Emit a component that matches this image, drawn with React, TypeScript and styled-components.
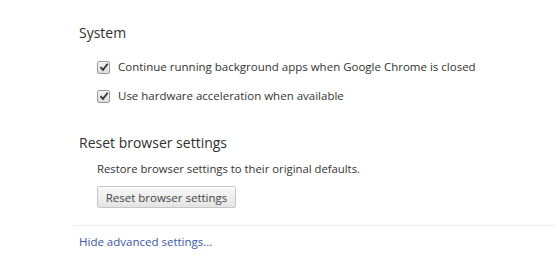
import styled, { createGlobalStyle } from "styled-components";

const GlobalStyle = createGlobalStyle`
  html, body {
    margin: 0;
    padding: 0;
    background: #fff;
  }
  body {
    font-family: "Open Sans", "Noto Sans", "Liberation Sans", sans-serif;
    color: #333;
  }
`;

const Page = styled.div`
  width: 555px;
  height: 265px;
  overflow: hidden;
  padding: 24px 0 0 73px;
  box-sizing: border-box;
`;

const Section = styled.section<{ $space: number }>`
  padding-left: 6px;
  margin-bottom: ${(p) => p.$space}px;
`;

const Heading = styled.h3<{ $space: number }>`
  margin: 0 0 ${(p) => p.$space}px;
  font-size: 14px;
  font-weight: 400;
  line-height: 18px;
  color: #303030;
`;

const Body = styled.div<{ $gap: number }>`
  padding-left: 18px;
  display: flex;
  flex-direction: column;
  gap: ${(p) => p.$gap}px;
`;

const CheckRow = styled.label`
  display: flex;
  align-items: center;
  gap: 8px;
  font-size: 11.5px;
  line-height: 18px;
  color: #333;
`;

const Box = styled.span`
  width: 11px;
  height: 11px;
  border: 1px solid #9a9a9a;
  border-radius: 2px;
  background: linear-gradient(#f2f2f2, #dcdcdc);
  display: flex;
  align-items: center;
  justify-content: center;
  flex-shrink: 0;
`;

const Text = styled.div`
  font-size: 11.3px;
  line-height: 16px;
  color: #333;
`;

const Button = styled.button`
  align-self: flex-start;
  height: 22px;
  width: 139px;
  padding: 0;
  font-family: inherit;
  font-size: 11.5px;
  color: #444;
  border: 1px solid #c6c6c6;
  border-radius: 2px;
  background: linear-gradient(#f8f8f8, #e4e4e4);
  box-shadow: inset 0 1px 0 #fff;
`;

const Divider = styled.div`
  height: 1px;
  background: #eeeeee;
`;

const Link = styled.a`
  display: block;
  margin: 8px 0 0 6px;
  font-size: 11.5px;
  line-height: 16px;
  color: #3a56a8;
  text-decoration: none;
`;

const Check = () => (
  <Box>
    <svg width="10" height="10" viewBox="0 0 10 10">
      <path d="M1.5 5.2 L4 7.8 L8.7 1.8" fill="none" stroke="#333" strokeWidth="1.8" />
    </svg>
  </Box>
);

export default function App() {
  return (
    <>
      <GlobalStyle />
      <Page>
        <Section $space={29}>
          <Heading $space={16}>System</Heading>
          <Body $gap={11}>
            <CheckRow>
              <Check />
              Continue running background apps when Google Chrome is closed
            </CheckRow>
            <CheckRow>
              <Check />
              Use hardware acceleration when available
            </CheckRow>
          </Body>
        </Section>
        <Section $space={17}>
          <Heading $space={9}>Reset browser settings</Heading>
          <Body $gap={9}>
            <Text>Restore browser settings to their original defaults.</Text>
            <Button>Reset browser settings</Button>
          </Body>
        </Section>
        <Divider />
        <Link href="#">Hide advanced settings...</Link>
      </Page>
    </>
  );
}
